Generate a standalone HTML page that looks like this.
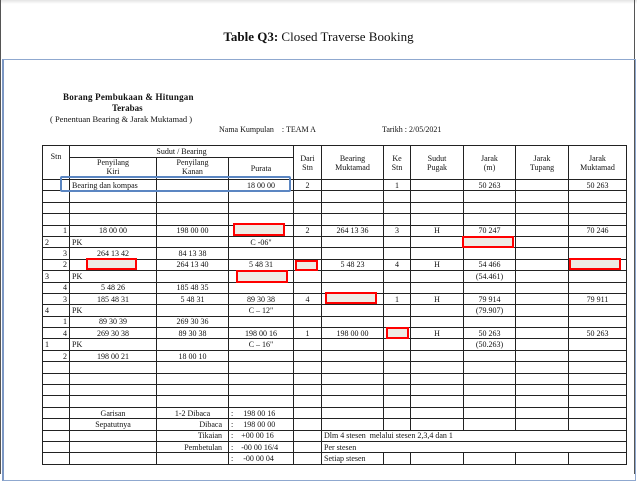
<!DOCTYPE html>
<html><head><meta charset="utf-8">
<style>
html,body{margin:0;padding:0;background:#fff;}
body{width:637px;height:474px;position:relative;overflow:hidden;font-family:"Liberation Serif",serif;color:#111;}
.vl{position:absolute;top:0;width:1px;height:474px;background:#555;}
.title{position:absolute;top:29px;left:0;width:637px;text-align:center;font-size:13px;}
.frame{position:absolute;left:2px;top:59px;width:631px;height:420px;border:1px solid #8fa8cf;border-left:2px solid #7d98c4;}
.t{position:absolute;font-size:8px;white-space:nowrap;}
table{position:absolute;left:42px;top:145px;border-collapse:collapse;table-layout:fixed;font-size:8px;}
td{border:1px solid #222;padding:0 2px;height:10.4px;line-height:9px;text-align:center;white-space:nowrap;overflow:hidden;}
.l{text-align:left;} .r{text-align:right;}
.rb{position:absolute;border:2px solid #f00;background:#eeebe4;box-sizing:border-box;}
</style></head><body>
<div style="position:absolute;left:0;top:0;width:637px;height:4px;background:linear-gradient(#e4e4e4,#fff);"></div>
<div class="vl" style="left:0"></div>
<div class="vl" style="left:634px"></div>
<div class="title"><b>Table Q3:</b> Closed Traverse Booking</div>
<div class="frame"></div>
<div class="t" style="left:63px;top:92px;font-weight:bold;font-size:9px;letter-spacing:0.2px;">Borang Pembukaan &amp; Hitungan</div>
<div class="t" style="left:112px;top:103px;font-weight:bold;font-size:9px;">Terabas</div>
<div class="t" style="left:50px;top:114px;font-size:8.5px;">( Penentuan Bearing &amp; Jarak Muktamad )</div>
<div class="t" style="left:219px;top:125px;">Nama Kumpulan &nbsp;&nbsp;&nbsp;: TEAM A</div>
<div class="t" style="left:382px;top:125px;">Tarikh : 2/05/2021</div>
<table>
<colgroup><col style="width:27px"><col style="width:87px"><col style="width:72px"><col style="width:65px"><col style="width:28px"><col style="width:62px"><col style="width:27px"><col style="width:53px"><col style="width:52px"><col style="width:53px"><col style="width:58px"></colgroup>
<tr style="height:12px"><td rowspan="2" style="vertical-align:top;padding-top:6px">Stn</td><td colspan="3">Sudut / Bearing</td><td rowspan="2">Dari<br>Stn</td><td rowspan="2">Bearing<br>Muktamad</td><td rowspan="2">Ke<br>Stn</td><td rowspan="2">Sudut<br>Pugak</td><td rowspan="2">Jarak<br>(m)</td><td rowspan="2">Jarak<br>Tupang</td><td rowspan="2">Jarak<br>Muktamad</td></tr>
<tr style="height:22px"><td style="vertical-align:top">Penyilang<br>Kiri</td><td style="vertical-align:top">Penyilang<br>Kanan</td><td>Purata</td></tr>
<tr><td></td><td class="l">Bearing dan kompas</td><td></td><td>18 00 00</td><td>2</td><td></td><td>1</td><td></td><td>50 263</td><td></td><td>50 263</td></tr>
<tr><td></td><td></td><td></td><td></td><td></td><td></td><td></td><td></td><td></td><td></td><td></td></tr>
<tr><td></td><td></td><td></td><td></td><td></td><td></td><td></td><td></td><td></td><td></td><td></td></tr>
<tr><td></td><td></td><td></td><td></td><td></td><td></td><td></td><td></td><td></td><td></td><td></td></tr>
<tr><td class="r">1</td><td>18 00 00</td><td>198 00 00</td><td></td><td>2</td><td>264 13 36</td><td>3</td><td>H</td><td>70 247</td><td></td><td>70 246</td></tr>
<tr><td class="l">2</td><td class="l">PK</td><td></td><td>C -06"</td><td></td><td></td><td></td><td></td><td></td><td></td><td></td></tr>
<tr><td class="r">3</td><td>264 13 42</td><td>84 13 38</td><td></td><td></td><td></td><td></td><td></td><td></td><td></td><td></td></tr>
<tr><td class="r">2</td><td></td><td>264 13 40</td><td>5 48 31</td><td></td><td>5 48 23</td><td>4</td><td>H</td><td>54 466</td><td></td><td></td></tr>
<tr><td class="l">3</td><td class="l">PK</td><td></td><td></td><td></td><td></td><td></td><td></td><td>(54.461)</td><td></td><td></td></tr>
<tr><td class="r">4</td><td>5 48 26</td><td>185 48 35</td><td></td><td></td><td></td><td></td><td></td><td></td><td></td><td></td></tr>
<tr><td class="r">3</td><td>185 48 31</td><td>5 48 31</td><td>89 30 38</td><td>4</td><td></td><td>1</td><td>H</td><td>79 914</td><td></td><td>79 911</td></tr>
<tr><td class="l">4</td><td class="l">PK</td><td></td><td>C &ndash; 12"</td><td></td><td></td><td></td><td></td><td>(79.907)</td><td></td><td></td></tr>
<tr><td class="r">1</td><td>89 30 39</td><td>269 30 36</td><td></td><td></td><td></td><td></td><td></td><td></td><td></td><td></td></tr>
<tr><td class="r">4</td><td>269 30 38</td><td>89 30 38</td><td>198 00 16</td><td>1</td><td>198 00 00</td><td></td><td>H</td><td>50 263</td><td></td><td>50 263</td></tr>
<tr><td class="l">1</td><td class="l">PK</td><td></td><td>C &ndash; 16"</td><td></td><td></td><td></td><td></td><td>(50.263)</td><td></td><td></td></tr>
<tr><td class="r">2</td><td>198 00 21</td><td>18 00 10</td><td></td><td></td><td></td><td></td><td></td><td></td><td></td><td></td></tr>
<tr><td></td><td></td><td></td><td></td><td></td><td></td><td></td><td></td><td></td><td></td><td></td></tr>
<tr><td></td><td></td><td></td><td></td><td></td><td></td><td></td><td></td><td></td><td></td><td></td></tr>
<tr><td></td><td></td><td></td><td></td><td></td><td></td><td></td><td></td><td></td><td></td><td></td></tr>
<tr><td></td><td></td><td></td><td></td><td></td><td></td><td></td><td></td><td></td><td></td><td></td></tr>
<tr><td></td><td>Garisan</td><td>1-2 Dibaca</td><td class="l">: &nbsp;&nbsp;&nbsp;&nbsp;198 00 16</td><td></td><td></td><td></td><td></td><td></td><td></td><td></td></tr>
<tr><td></td><td>Sepatutnya</td><td class="r">Dibaca&nbsp;&nbsp;</td><td class="l">: &nbsp;&nbsp;&nbsp;&nbsp;198 00 00</td><td></td><td></td><td></td><td></td><td></td><td></td><td></td></tr>
<tr><td></td><td></td><td class="r">Tikaian&nbsp;&nbsp;</td><td class="l">: &nbsp;&nbsp;&nbsp;+00 00 16</td><td></td><td class="l" colspan="6">Dlm 4 stesen &nbsp;melalui stesen 2,3,4 dan 1</td></tr>
<tr><td></td><td></td><td class="r">Pembetulan&nbsp;&nbsp;</td><td class="l">: &nbsp;&nbsp;&nbsp;-00 00 16/4</td><td></td><td class="l" colspan="6">Per stesen</td></tr>
<tr><td></td><td></td><td></td><td class="l">: &nbsp;&nbsp;&nbsp;&nbsp;-00 00 04</td><td></td><td class="l">Setiap stesen</td><td></td><td></td><td></td><td></td><td></td></tr>
</table>
<div style="position:absolute;left:60px;top:176px;width:231px;height:16px;border:2px solid #5b86c2;box-sizing:border-box;border-radius:2px;"></div>
<div class="rb" style="left:233px;top:223px;width:52px;height:13px"></div>
<div class="rb" style="left:86px;top:258px;width:51px;height:12px"></div>
<div class="rb" style="left:236px;top:270px;width:52px;height:13px"></div>
<div class="rb" style="left:295px;top:260px;width:23px;height:11px"></div>
<div class="rb" style="left:462px;top:236px;width:52px;height:12px"></div>
<div class="rb" style="left:569px;top:258px;width:52px;height:12px"></div>
<div class="rb" style="left:325px;top:292px;width:52px;height:12px"></div>
<div class="rb" style="left:386px;top:327px;width:23px;height:12px"></div>
</body></html>
